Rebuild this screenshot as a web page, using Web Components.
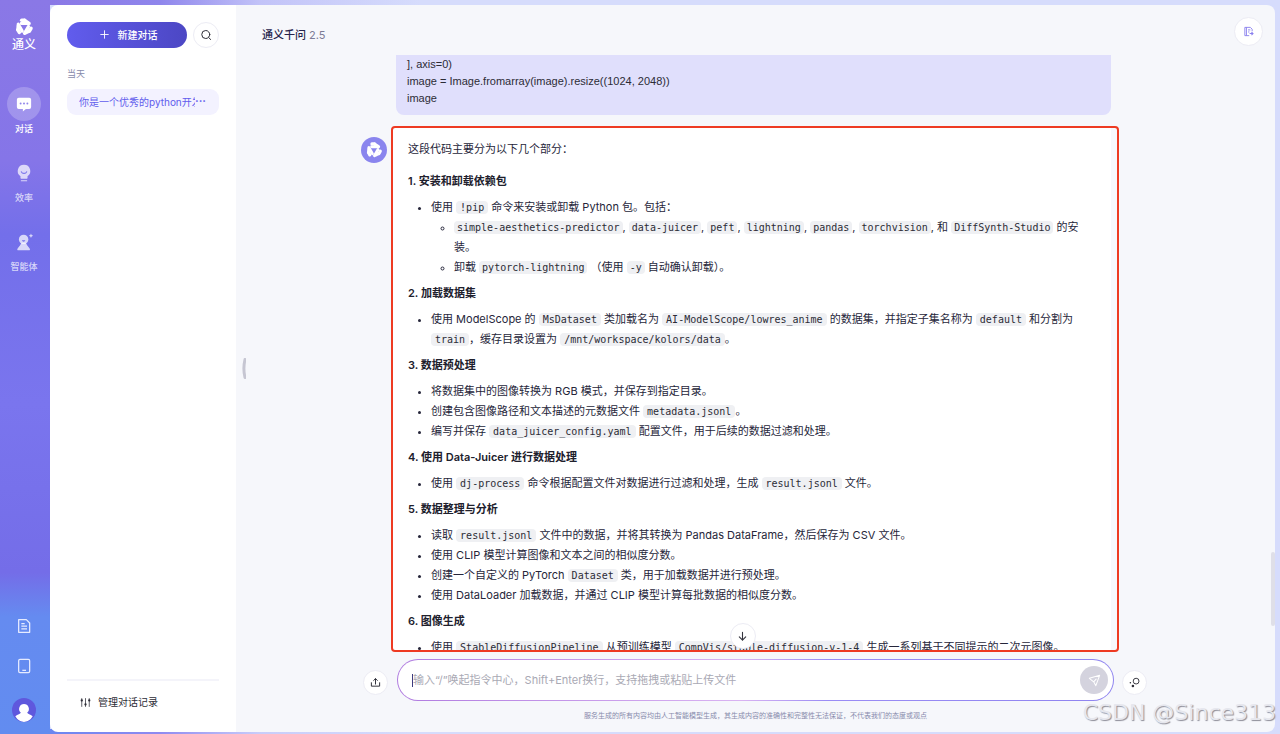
<!DOCTYPE html>
<html lang="zh-CN">
<head>
<meta charset="utf-8">
<title>通义千问</title>
<style>
html,body{height:100%;margin:0}
body{font-family:Inter,"Noto Sans CJK SC",sans-serif;color:#26244c}
</style>
</head>
<body>
<tongyi-app></tongyi-app>
<script>
const ARM = `<path stroke-width="4.200" d="M9.200 3.900H12.800"/><path stroke-width="3.800" d="M8.800 7.700H18.300M12.800 3.900L17.400 7"/>`;
const ICONS = {
  flower: `<g fill="none" stroke="currentColor" stroke-linecap="round" stroke-linejoin="round">${ARM}<g transform="rotate(120 12 12)">${ARM}</g><g transform="rotate(240 12 12)">${ARM}</g></g>`,
  chat: `<path fill="currentColor" d="M5 3.500h14A2.500 2.500 0 0 1 21.500 6v10a2.500 2.500 0 0 1-2.500 2.500h-4.500l-4 3.500v-3.500H5A2.500 2.500 0 0 1 2.500 16V6A2.500 2.500 0 0 1 5 3.500z"/><g fill="#9186ea"><circle cx="7.500" cy="11.200" r="1.300"/><circle cx="12" cy="11.200" r="1.300"/><circle cx="16.500" cy="11.200" r="1.300"/></g>`,
  bulb: `<path fill="currentColor" d="M12 1a8.300 8.300 0 0 0-4.700 15.200V18.500a1 1 0 0 0 1 1h7.400a1 1 0 0 0 1-1v-2.300A8.300 8.300 0 0 0 12 1z"/><path d="M8.500 10.500c1.200 2.800 5.800 2.800 7 0" fill="none" stroke="#7a74ea" stroke-width="1.600" stroke-linecap="round"/><path d="M8.500 22.300h7" stroke="currentColor" stroke-width="1.600" stroke-linecap="round"/>`,
  agent: `<g fill="currentColor"><circle cx="11.500" cy="8.500" r="6.300"/><path d="M8.500 13h6c1 3 3 5 5 7.500 1 1.500.5 2.500-1 2.500h-14c-1.500 0-2-1-1-2.500 2-2.500 4-4.500 5-7.500z"/><path d="M21.300.8l.9 2 2 .9-2 .9-.9 2-.9-2-2-.9 2-.9z"/></g><path d="M9.300 9.800h4.400c-.2 2.400-4.200 2.400-4.400 0z" fill="#7470e8"/>`,
  doc: `<g fill="none" stroke="currentColor" stroke-width="1.900" stroke-linejoin="round"><path d="M4 2.500h11.500L20.500 7.500v14H4z"/><path d="M8 8.300h5M8 12.200h8.500M8 16.200h8.500"/></g>`,
  tablet: `<g fill="none" stroke="currentColor" stroke-width="1.900"><rect x="4" y="2" width="16.500" height="20" rx="2"/><path d="M9.500 18.500h5.500"/></g>`,
  plus: `<path d="M12 2v20M2 12h20" stroke="currentColor" stroke-width="2.400" stroke-linecap="round"/>`,
  search: `<g fill="none" stroke="currentColor" stroke-width="2" stroke-linecap="round"><circle cx="11.500" cy="11" r="8"/><path d="M17.300 17l4 4"/></g>`,
  sliders: `<g stroke="currentColor" stroke-width="2" stroke-linecap="round"><path d="M2 1.500v21M12 1.500v21M22 1.500v21"/></g><g fill="currentColor"><circle cx="2" cy="6.500" r="3"/><circle cx="12" cy="17" r="3"/><circle cx="22" cy="6.500" r="3"/></g>`,
  note: `<g fill="none" stroke="currentColor" stroke-width="2"><path d="M13.500 21H4V3h12l4 4v4.500"/><path d="M7.500 3v18M11 8.500h5M11 13h3"/></g><path d="M14.500 16.500h7m-3-3.300l3.300 3.300-3.300 3.300" fill="none" stroke="currentColor" stroke-width="2.400"/>`,
  down: `<path d="M12 3v17M5 13l7 7 7-7" fill="none" stroke="currentColor" stroke-width="2.400" stroke-linecap="round" stroke-linejoin="round"/>`,
  upload: `<path d="M3 12.500V20h18v-7.500M12 15.500V4M8 7.500L12 3.500l4 4" fill="none" stroke="currentColor" stroke-width="2.100" stroke-linecap="round" stroke-linejoin="round"/>`,
  send: `<path d="M2.500 8L21.500 2.500 14.500 21.500 10.500 14.500zM10.500 14.500L15 9.500" fill="none" stroke="currentColor" stroke-width="1.900" stroke-linejoin="round" stroke-linecap="round"/>`,
  bubbles: `<circle cx="15.500" cy="9" r="6.300" fill="none" stroke="currentColor" stroke-width="2"/><circle cx="8.500" cy="19.500" r="2.800" fill="currentColor"/><circle cx="3" cy="12.500" r="1.700" fill="currentColor"/>`,
  user: `<path fill="#fff" d="M12 6a4.900 4.900 0 0 1 3.200 8.600c.4 1.300 3 2 5.500 3.600A11.800 11.800 0 0 1 12 24a11.800 11.800 0 0 1-8.700-5.800c2.500-1.600 5.100-2.300 5.500-3.600A4.900 4.900 0 0 1 12 6z"/>`
};

function define(name, html, setup) {
  const t = document.createElement('template');
  t.innerHTML = html;
  customElements.define(name, class extends HTMLElement {
    constructor() {
      super();
      this.attachShadow({mode: 'open'}).append(t.content.cloneNode(true));
      if (setup) setup(this, this.shadowRoot);
    }
  });
}

customElements.define('ty-icon', class extends HTMLElement {
  connectedCallback() {
    if (this.shadowRoot) return;
    this.attachShadow({mode: 'open'}).innerHTML =
      `<style>:host{display:block;width:16px;height:16px;flex:none}svg{display:block;width:100%;height:100%;overflow:visible}</style>
       <svg viewBox="0 0 24 24" aria-hidden="true">${ICONS[this.getAttribute('name')]}</svg>`;
  }
});

define('round-button', `
<style>
:host{display:block;width:26px;height:26px;flex:none}
button{width:100%;height:100%;padding:0;border:1px solid #ececf4;border-radius:50%;background:#fff;color:inherit;display:grid;place-items:center;box-sizing:border-box}
</style>
<button type="button"><slot></slot></button>`, (el, root) => {
  root.querySelector('button').setAttribute('aria-label', el.getAttribute('label') || '按钮');
});

define('nav-rail', `
<style>
:host{display:flex;flex-direction:column;align-items:center;color:#fff;padding:17px 2px 12px 0;box-sizing:border-box}
.logo{display:flex;flex-direction:column;align-items:center;font-size:12px;line-height:16px;font-weight:500}
.logo ty-icon{width:20px;height:20px}
nav{display:flex;flex-direction:column;gap:19px;margin-top:34px}
nav a{display:flex;flex-direction:column;align-items:center;color:#ffffffb8;text-decoration:none;font-size:9px;line-height:16px;font-weight:500}
nav span{width:34px;height:34px;border-radius:50%;display:grid;place-items:center}
nav a.on{color:#fff}
nav a.on span{background:#ffffff38}
nav ty-icon{width:18px;height:18px}
.foot{margin-top:auto;display:flex;flex-direction:column;align-items:center;gap:24px;color:#e6ebff}
.user{display:block;width:24px;height:24px;border-radius:50%;background:#5f58dd;overflow:hidden}
.user ty-icon{width:24px;height:24px}
</style>
<div class="logo"><ty-icon name="flower"></ty-icon>通义</div>
<nav>
<a class="on" href="#chat"><span><ty-icon name="chat"></ty-icon></span>对话</a>
<a href="#tools"><span><ty-icon name="bulb"></ty-icon></span>效率</a>
<a href="#agents"><span><ty-icon name="agent"></ty-icon></span>智能体</a>
</nav>
<div class="foot"><ty-icon name="doc"></ty-icon><ty-icon name="tablet"></ty-icon><a class="user" href="#me" aria-label="我的"><ty-icon name="user"></ty-icon></a></div>`);

define('history-panel', `
<style>
:host{display:flex;flex-direction:column;background:#fff;padding:17px 17px 11px;box-sizing:border-box;min-width:0;font-size:10px;color:#2c2c36}
.top{display:flex;gap:6px;align-items:center}
.new{flex:1;height:26px;border:0;border-radius:13px;background:linear-gradient(90deg,#615ced,#4c47c4);color:#fff;font:500 10px Inter,"Noto Sans CJK SC",sans-serif;display:flex;align-items:center;justify-content:center;gap:9px;padding:0 0 2px 3px}
.new ty-icon{width:9px;height:9px}
.top round-button ty-icon{width:12px;height:12px}
h2{font-size:9px;line-height:14px;font-weight:400;color:#878aab;margin:19px 0 8px}
.item{display:flex;align-items:center;height:26px;border-radius:9px;background:#f3f2ff;color:#615ced;padding:0 13px 2px 12px;box-sizing:border-box;text-decoration:none;white-space:nowrap}
.item span{flex:1;overflow:hidden;min-width:0}
.item b{line-height:10px;font-size:11px}
.manage{margin-top:auto;border-top:2px solid #f4f4fa;display:flex;align-items:center;gap:8px;padding:14px 14px 12px;line-height:14px;color:inherit;text-decoration:none}
.manage ty-icon{width:9px;height:9px}
</style>
<div class="top"><button class="new" type="button"><ty-icon name="plus"></ty-icon>新建对话</button><round-button label="搜索"><ty-icon name="search"></ty-icon></round-button></div>
<h2>当天</h2>
<a class="item" href="#c1"><span>你是一个优秀的python开发</span><b>···</b></a>
<a class="manage" href="#manage"><ty-icon name="sliders"></ty-icon>管理对话记录</a>`);

define('chat-row', `
<style>
:host{display:grid;grid-template-columns:minmax(34px,1fr) minmax(0,728px) minmax(34px,1fr);min-height:0;padding-right:1px}
.l{display:flex;justify-content:flex-end}
.m{min-width:0;min-height:0;display:flex;flex-direction:column}
</style>
<div class="l"><slot name="left"></slot></div><div class="m"><slot></slot></div><div><slot name="right"></slot></div>`);

define('user-message', `
<style>
:host{display:block;margin:0 8px 0 5px;background:#e0dffc;border-radius:0 0 8px 8px;padding:1px 11px 8px;font:11px/17px "Liberation Sans",sans-serif;color:#2c2c36}
div{white-space:pre-line}
</style><div><slot></slot></div>`);

define('answer-card', `
<style>
:host{display:block;flex:1;min-height:0;overflow:hidden;box-sizing:border-box;border:2px solid #ee3a22;border-radius:4px;background:linear-gradient(#fff,#fff) 0 0/calc(100% - 6px) 100% no-repeat #f7f8fc;padding:11px 20px 0 15px;font-size:11px;line-height:20px;color:#26263a}
p{margin:0 0 12px}
h3{font-size:11px;line-height:20px;font-weight:600;margin:6px 0;color:#20202c}
ul{margin:0;padding-left:23px}
ul ul{list-style:circle}
li::marker{font-size:10px}
code{font:10px/14px "DejaVu Sans Mono",monospace;background:#eff0f3;border-radius:4px;padding:1px 4px;color:#2c2c36}
ul ul code{padding:1px 3px}
</style>
<p>这段代码主要分为以下几个部分：</p>
<h3>1. 安装和卸载依赖包</h3>
<ul><li>使用 <code>!pip</code> 命令来安装或卸载 Python 包。包括：
<ul><li><code>simple-aesthetics-predictor</code>, <code>data-juicer</code>, <code>peft</code>, <code>lightning</code>, <code>pandas</code>, <code>torchvision</code>, 和 <code>DiffSynth-Studio</code> 的安<wbr>装。</li>
<li>卸载 <code>pytorch-lightning</code> （使用 <code>-y</code> 自动确认卸载）。</li></ul></li></ul>
<h3>2. 加载数据集</h3>
<ul><li>使用 ModelScope 的 <code>MsDataset</code> 类加载名为 <code>AI-ModelScope/lowres_anime</code> 的数据集，并指定子集名称为 <code>default</code> 和分割为 <code>train</code>，缓存目录设置为 <code>/mnt/workspace/kolors/data</code>。</li></ul>
<h3>3. 数据预处理</h3>
<ul><li>将数据集中的图像转换为 RGB 模式，并保存到指定目录。</li>
<li>创建包含图像路径和文本描述的元数据文件 <code>metadata.jsonl</code>。</li>
<li>编写并保存 <code>data_juicer_config.yaml</code> 配置文件，用于后续的数据过滤和处理。</li></ul>
<h3>4. 使用 Data-Juicer 进行数据处理</h3>
<ul><li>使用 <code>dj-process</code> 命令根据配置文件对数据进行过滤和处理，生成 <code>result.jsonl</code> 文件。</li></ul>
<h3>5. 数据整理与分析</h3>
<ul><li>读取 <code>result.jsonl</code> 文件中的数据，并将其转换为 Pandas DataFrame，然后保存为 CSV 文件。</li>
<li>使用 CLIP 模型计算图像和文本之间的相似度分数。</li>
<li>创建一个自定义的 PyTorch <code>Dataset</code> 类，用于加载数据并进行预处理。</li>
<li>使用 DataLoader 加载数据，并通过 CLIP 模型计算每批数据的相似度分数。</li></ul>
<h3>6. 图像生成</h3>
<ul><li>使用 <code>StableDiffusionPipeline</code> 从预训练模型 <code>CompVis/stable-diffusion-v-1-4</code> 生成一系列基于不同提示的二次元图像。</li></ul>`);

define('chat-composer', `
<style>
:host{display:block;margin:0 5px 0 6px}
form{display:flex;align-items:center;height:42px;box-sizing:border-box;border:1px solid transparent;border-radius:21px;padding:0 5px 0 14px;background:linear-gradient(#fff,#fff) padding-box,linear-gradient(90deg,#b07be0,#d9b3f2 48%,#9a8cf5 60%,#8f84f0) border-box}
.caret{width:1px;height:13px;background:#3c3a80}
input{flex:1;min-width:0;border:0;outline:0;padding:0;background:none;font:11px Inter,"Noto Sans CJK SC",sans-serif;color:#26244c}
input::placeholder{color:#a9a9b4;opacity:1}
button{width:28px;height:28px;border:0;border-radius:50%;background:#d4d3de;color:#fff;padding:0;display:grid;place-items:center}
button ty-icon{width:13px;height:13px}
</style>
<form><i class="caret"></i><input type="text" aria-label="输入消息" placeholder="输入“/”唤起指令中心，Shift+Enter换行，支持拖拽或粘贴上传文件"><button type="button" aria-label="发送"><ty-icon name="send"></ty-icon></button></form>`);

define('chat-main', `
<style>
:host{display:flex;flex-direction:column;position:relative;min-width:0;min-height:0;background:#f6f7fb}
header{display:flex;justify-content:space-between;align-items:center;height:50px;flex:none;padding:2px 12px 0 26px;box-sizing:border-box}
h1{margin:0;padding-top:6px;font-size:11px;font-weight:500;color:#26244c}
h1 span{font-weight:400;color:#7c7c96}
header round-button{width:29px;height:29px;color:#8a80ee}
header ty-icon{width:11px;height:11px}
.answer{flex:1;margin-top:11px;position:relative}
.avatar{width:26px;height:26px;margin:11px 4px 0 0;border-radius:50%;background:#8a85ee;color:#fff;display:grid;place-items:center}
.avatar ty-icon{width:18px;height:18px}
.jump{position:absolute;left:50%;bottom:3px;margin-left:-26px;color:#33333d}
.jump ty-icon,.side ty-icon{width:11px;height:11px}
.input{margin-top:7px}
.side{margin:11px 3px 0;width:25px;height:25px;color:#2c2c36}
footer{font-size:7px;line-height:10px;color:#878aab;text-align:center;padding:10px 0 11px}
.fold{position:absolute;left:6px;top:353px;width:4px;height:21px;color:#c6c6d2}
.bar{position:absolute;right:0;top:547px;width:4px;height:74px;border-radius:2px;background:#dfdfe8}
</style>
<header><h1>通义千问 <span>2.5</span></h1><round-button label="新建文档"><ty-icon name="note"></ty-icon></round-button></header>
<chat-row><user-message>], axis=0)
image = Image.fromarray(image).resize((1024, 2048))
image</user-message></chat-row>
<chat-row class="answer"><div class="avatar" slot="left"><ty-icon name="flower"></ty-icon></div><answer-card></answer-card><round-button class="jump" slot="right" label="回到底部"><ty-icon name="down"></ty-icon></round-button></chat-row>
<chat-row class="input"><round-button class="side" slot="left" label="上传"><ty-icon name="upload"></ty-icon></round-button><chat-composer></chat-composer><round-button class="side" slot="right" label="指令"><ty-icon name="bubbles"></ty-icon></round-button></chat-row>
<footer>服务生成的所有内容均由人工智能模型生成，其生成内容的准确性和完整性无法保证，不代表我们的态度或观点</footer>
<svg class="fold" viewBox="0 0 4 21" aria-hidden="true"><path d="M3 1.500Q.8 10.500 3 19.500" fill="none" stroke="currentColor" stroke-width="3" stroke-linecap="round"/></svg>
<div class="bar"></div>`);

define('tongyi-app', `
<style>
:host{display:grid;grid-template-columns:50px minmax(0,1fr);height:100vh;min-height:600px;box-sizing:border-box;padding-right:5px;position:relative;overflow:hidden;
background:linear-gradient(#8a78e6 0,#8575e8 22%,#736fea 32%,#7a75ee 55%,#746de8 78%,#658bf0 84%,#628cf0 100%) 0 0/50px 100% no-repeat,linear-gradient(90deg,#8a78e6 50px,#8f86ec 160px,#c2c3f8 260px,#d6dcfc 420px) 0 0/100% 5px no-repeat,linear-gradient(90deg,#6b86f0 50px,#8f8af0 160px,#c9cdfa 260px,#d6dcfc 420px) 0 100%/100% 5px no-repeat,#d6dcfc}
.panel{display:grid;grid-template-columns:186px minmax(0,1fr);margin:5px 0 2px;border-radius:8px;overflow:hidden;min-height:0}
.mark{position:absolute;right:4px;bottom:7px;font:22px/28px "DejaVu Sans",sans-serif;color:#e6e7ee;text-shadow:1px 1px 1px #8d8d98}
</style>
<nav-rail></nav-rail>
<div class="panel"><history-panel></history-panel><chat-main></chat-main></div>
<div class="mark">CSDN @Since313</div>`);
</script>
</body>
</html>
